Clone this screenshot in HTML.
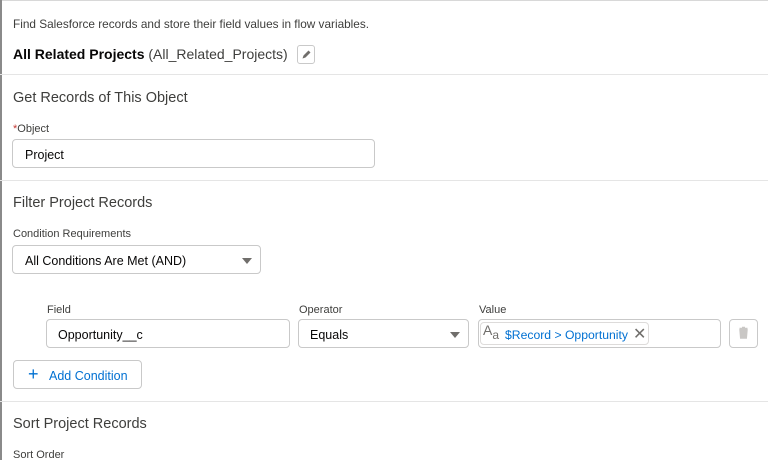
<!DOCTYPE html><html><head><style>
body{margin:0;width:768px;height:460px;overflow:hidden;background:#fff;font-family:"Liberation Sans",sans-serif;color:#080707;position:relative}
.a{position:absolute;white-space:nowrap}
.box{position:absolute;border:1px solid #c9c9c9;border-radius:4px;background:#fff;box-sizing:border-box}
.hr{position:absolute;left:0;width:768px;height:1px;background:#e5e5e5}
.lbl{font-size:11px;color:#3e3e3c}
.h{font-size:14.5px;color:#3e3e3c}
.t{font-size:12.5px;color:#080707}
.caret{position:absolute;width:0;height:0;border-left:5px solid transparent;border-right:5px solid transparent;border-top:6px solid #706e6b}
</style></head><body>
<div class="a" style="left:0;top:0;width:768px;height:1px;background:#d8d8d8"></div>
<div class="a" style="left:0;top:0;width:2px;height:460px;background:#8a8a8a"></div>
<div class="a" style="left:13px;top:17px;font-size:11.8px;color:#3e3e3c">Find Salesforce records and store their field values in flow variables.</div>
<div class="a" style="left:13px;top:46px;font-size:14px"><b>All Related Projects</b> <span style="color:#3e3e3c">(All_Related_Projects)</span></div>
<div class="box" style="left:297px;top:45px;width:18px;height:19px;border-radius:3px"><svg width="16" height="17" viewBox="0 0 16 17"><path d="M4.5 12.5l1-3 5-5 2 2-5 5z" fill="#706e6b"/></svg></div>
<div class="hr" style="top:74px"></div>
<div class="a h" style="left:13px;top:90px">Get Records of This Object</div>
<div class="a lbl" style="left:13px;top:123px"><span style="color:#c23934">*</span>Object</div>
<div class="box" style="left:12px;top:139px;width:363px;height:29px"></div>
<div class="a t" style="left:25px;top:148px">Project</div>
<div class="hr" style="top:180px"></div>
<div class="a h" style="left:13px;top:195px">Filter Project Records</div>
<div class="a lbl" style="left:13px;top:228px">Condition Requirements</div>
<div class="box" style="left:12px;top:245px;width:249px;height:29px"></div>
<div class="a t" style="left:25px;top:254px">All Conditions Are Met (AND)</div>
<div class="caret" style="left:242px;top:258px"></div>
<div class="a lbl" style="left:47px;top:304px">Field</div>
<div class="a lbl" style="left:299px;top:304px">Operator</div>
<div class="a lbl" style="left:479px;top:304px">Value</div>
<div class="box" style="left:46px;top:319px;width:244px;height:29px"></div>
<div class="a t" style="left:58px;top:328px">Opportunity__c</div>
<div class="box" style="left:298px;top:319px;width:171px;height:29px"></div>
<div class="a t" style="left:310px;top:328px">Equals</div>
<div class="caret" style="left:450px;top:332px"></div>
<div class="box" style="left:478px;top:319px;width:243px;height:29px"></div>
<div class="box" style="left:480px;top:322px;width:169px;height:23px;border-color:#dddbda"></div>
<div class="a" style="left:483px;top:322px;font-size:14px;color:#706e6b">A<span style="font-size:12px;position:relative;top:4px">a</span></div>
<div class="a" style="left:505px;top:328px;font-size:12.2px;color:#0070d2">$Record &gt; Opportunity</div>
<div class="a" style="left:633px;top:324px;font-size:16px;color:#706e6b">✕</div>
<div class="box" style="left:729px;top:319px;width:29px;height:29px"><svg width="27" height="27" viewBox="0 0 27 27"><path d="M10 10h7l-.7 8h-5.6zM9.5 8.5h8M12 7.5h3" stroke="#c9c7c5" stroke-width="1.4" fill="#c9c7c5"/></svg></div>
<div class="box" style="left:13px;top:360px;width:129px;height:29px"></div>
<div class="a" style="left:28px;top:364px;font-size:18px;color:#0070d2">+</div>
<div class="a" style="left:49px;top:369px;font-size:12.5px;color:#0070d2">Add Condition</div>
<div class="hr" style="top:401px"></div>
<div class="a h" style="left:13px;top:416px">Sort Project Records</div>
<div class="a lbl" style="left:13px;top:449px">Sort Order</div>
</body></html>
